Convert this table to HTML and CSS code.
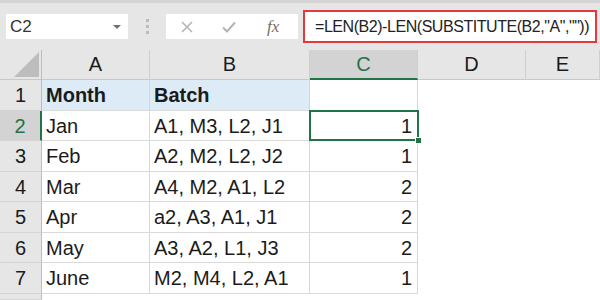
FILE: index.html
```html
<!DOCTYPE html>
<html lang="en">

<head>
  <meta charset="UTF-8">
  <title>Count A in Batch</title>
  <link rel="stylesheet" href="styles.css">
</head>

<body>
  <div class="formula-bar">
    <div class="name-box">
      <span>C2</span>
      <span class="caret"></span>
    </div>
    <div class="grip"><i></i><i></i><i></i></div>
    <div class="actions">
      <svg width="14" height="14" viewBox="0 0 14 14"><path d="M2 2 L12 12 M12 2 L2 12" stroke="#b4b4b4" stroke-width="1.6" fill="none"/></svg>
      <svg width="16" height="14" viewBox="0 0 16 14"><path d="M2 7.5 L6 11.5 L14 2.5" stroke="#b4b4b4" stroke-width="2" fill="none"/></svg>
      <span class="fx">fx</span>
    </div>
    <div class="formula">=LEN(B2)-LEN(SUBSTITUTE(B2,"A",""))</div>
  </div>

  <div class="sheet">
    <!-- column headings -->
    <div class="corner"><span></span></div>
    <div class="col-head">A</div>
    <div class="col-head">B</div>
    <div class="col-head active">C</div>
    <div class="col-head">D</div>
    <div class="col-head">E</div>

    <div class="row-head">1</div>
    <div class="cell hd">Month</div>
    <div class="cell hd">Batch</div>
    <div class="cell num"></div>
    <div class="blank"></div>
    <div class="blank"></div>

    <div class="row-head active">2</div>
    <div class="cell">Jan</div>
    <div class="cell">A1, M3, L2, J1</div>
    <div class="cell num sel">1</div>
    <div class="blank"></div>
    <div class="blank"></div>

    <div class="row-head">3</div>
    <div class="cell">Feb</div>
    <div class="cell">A2, M2, L2, J2</div>
    <div class="cell num">1</div>
    <div class="blank"></div>
    <div class="blank"></div>

    <div class="row-head">4</div>
    <div class="cell">Mar</div>
    <div class="cell">A4, M2, A1, L2</div>
    <div class="cell num">2</div>
    <div class="blank"></div>
    <div class="blank"></div>

    <div class="row-head">5</div>
    <div class="cell">Apr</div>
    <div class="cell">a2, A3, A1, J1</div>
    <div class="cell num">2</div>
    <div class="blank"></div>
    <div class="blank"></div>

    <div class="row-head">6</div>
    <div class="cell">May</div>
    <div class="cell">A3, A2, L1, J3</div>
    <div class="cell num">2</div>
    <div class="blank"></div>
    <div class="blank"></div>

    <div class="row-head">7</div>
    <div class="cell">June</div>
    <div class="cell">M2, M4, L2, A1</div>
    <div class="cell num">1</div>
    <div class="blank"></div>
    <div class="blank"></div>

    <div class="row-head"></div>
    <div class="blank"></div>
    <div class="blank"></div>
    <div class="blank"></div>
    <div class="blank"></div>
    <div class="blank"></div>
  </div>
</body>

</html>
```

FILE: styles.css
```css
body {
  margin: 0;
  padding: 0;
  width: 600px;
  height: 300px;
  overflow: hidden;
  background-color: #fff;
  color: #1b1b1b;
  font-family: "Liberation Sans", Arial, sans-serif;
}

/* top bar with name box and formula */
.formula-bar {
  height: 50px;
  box-sizing: border-box;
  border-top: 3px solid #d4d4d4;
  background-color: #e6e6e6;
  display: flex;
  align-items: center;
  padding-left: 6px;
}

.name-box {
  width: 122px;
  height: 25px;
  background-color: #fff;
  display: flex;
  align-items: center;
  justify-content: space-between;
  padding: 0 7px 0 4px;
  box-sizing: border-box;
  font-size: 17px;
  color: #333;
}

.caret {
  width: 0;
  height: 0;
  border-left: 4px solid transparent;
  border-right: 4px solid transparent;
  border-top: 4px solid #707070;
}

.grip {
  width: 38px;
  display: flex;
  flex-direction: column;
  align-items: center;
  gap: 3px;
}

.grip i {
  width: 3px;
  height: 3px;
  background-color: #bcbcbc;
}

.actions {
  width: 132px;
  height: 25px;
  background-color: #fff;
  display: flex;
  align-items: center;
  padding-left: 14px;
  gap: 27px;
  box-sizing: border-box;
}

.fx {
  font-family: "Liberation Serif", serif;
  font-style: italic;
  font-size: 17px;
  color: #6f6f6f;
  margin-left: 3px;
}

.formula {
  margin-left: 5px;
  width: 294px;
  height: 33px;
  box-sizing: border-box;
  border: 2px solid #e2393f;
  background-color: #fff;
  padding-left: 10px;
  font-size: 16px;
  letter-spacing: -0.45px;
  line-height: 29px;
  color: #222;
  white-space: nowrap;
}

/* worksheet grid */
.sheet {
  display: grid;
  grid-template-columns: 42px 108px 160px 108px 108px 1fr;
  grid-template-rows: 30px repeat(7, 30.5px) 1fr;
  height: 250px;
  font-size: 20px;
}

.corner,
.col-head,
.row-head {
  background-color: #e6e6e6;
  box-sizing: border-box;
}

.corner {
  border-right: 1px solid #bdbdbd;
  border-bottom: 1px solid #c8c8c8;
  display: flex;
  align-items: flex-end;
  justify-content: flex-end;
  padding: 0 2px 2px 0;
}

.corner span {
  width: 25px;
  height: 25px;
  background-color: #bdbdbd;
  clip-path: polygon(100% 0, 100% 100%, 0 100%);
}

.col-head {
  border-right: 1px solid #cfcfcf;
  border-bottom: 1px solid #c8c8c8;
  text-align: center;
  line-height: 29px;
}

.col-head.active {
  background-color: #d3d3d3;
  color: #217346;
  border-bottom: 2px solid #217346;
}

.row-head {
  border-right: 1px solid #bdbdbd;
  border-bottom: 1px solid #d4d4d4;
  text-align: center;
  line-height: 30px;
}

.row-head.active {
  background-color: #d3d3d3;
  color: #217346;
  border-right: 2px solid #217346;
}

.cell {
  border-right: 1px solid #d6d6d6;
  border-bottom: 1px solid #dadada;
  padding-left: 4px;
  line-height: 30px;
  white-space: nowrap;
  overflow: hidden;
}

.cell.hd {
  background-color: #ddebf7;
  font-weight: bold;
}

.cell.num {
  text-align: right;
  padding: 0 5px 0 0;
}

.cell.sel {
  position: relative;
  overflow: visible;
}

/* active cell outline and fill handle */
.cell.sel::after {
  content: "";
  position: absolute;
  left: -1px;
  top: -1px;
  right: -2px;
  bottom: -1px;
  border: 2px solid #217346;
}

.cell.sel::before {
  content: "";
  position: absolute;
  right: -5px;
  bottom: -4px;
  width: 5px;
  height: 5px;
  background-color: #217346;
  border: 1px solid #fff;
  z-index: 1;
}

.blank {
  background-color: #fff;
}
```
